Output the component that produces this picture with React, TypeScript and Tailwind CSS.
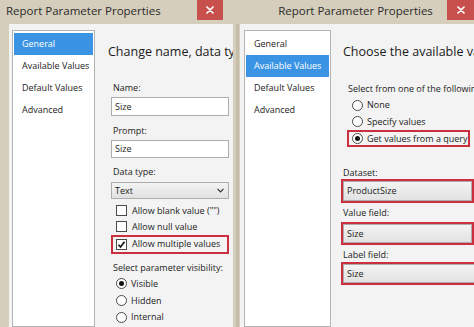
import type { ReactNode } from 'react';

const navItems = ['General', 'Available Values', 'Default Values', 'Advanced'];

function CloseButton({ className = '' }: { className?: string }) {
    return (
        <div className={`flex h-[20px] shrink-0 items-center justify-center bg-[#c8504c] ${className}`}>
            <svg width="8" height="8" viewBox="0 0 8 8">
                <path d="M1 1l6 6M7 1L1 7" stroke="#fff" strokeWidth="1.7" strokeLinecap="round" />
            </svg>
        </div>
    );
}

function NavList({ active, width }: { active: number; width: string }) {
    return (
        <div className={`${width} shrink-0 self-stretch border border-[#b4b4b4] bg-white px-[1px] pt-[2px]`}>
            {navItems.map((item, i) => (
                <div
                    key={item}
                    className={`flex h-[22px] items-center pl-[8px] whitespace-nowrap ${i === active ? 'bg-[#3b93e4] text-white' : 'text-[#222]'}`}
                >
                    {item}
                </div>
            ))}
        </div>
    );
}

function Label({ children, className = '' }: { children: ReactNode; className?: string }) {
    return <div className={`h-[12px] overflow-hidden leading-[12px] pl-[2px] whitespace-nowrap ${className}`}>{children}</div>;
}

function TextBox({ value, height }: { value: string; height: string }) {
    return (
        <div className={`${height} flex items-center border border-[#abadb3] bg-white pl-[3px]`}>{value}</div>
    );
}

function Radio({ checked }: { checked?: boolean }) {
    return (
        <span className="flex h-[11px] w-[11px] shrink-0 items-center justify-center rounded-full border border-[#4a4a4a] bg-white">
            {checked && <span className="h-[5px] w-[5px] rounded-full bg-[#111]" />}
        </span>
    );
}

function CheckBox({ checked }: { checked?: boolean }) {
    return (
        <span className="flex h-[11px] w-[11px] shrink-0 items-center justify-center border border-[#4a4a4a] bg-white">
            {checked && (
                <svg width="9" height="9" viewBox="0 0 9 9">
                    <path d="M1.5 4.8l2 2.2 4-5.2" fill="none" stroke="#111" strokeWidth="1.6" />
                </svg>
            )}
        </span>
    );
}

function GreySelect({ value, chevron }: { value: string; chevron?: boolean }) {
    return (
        <div className="flex h-full items-center justify-between border border-[#adadad] bg-gradient-to-b from-[#f3f3f3] to-[#e2e2e2] pl-[3px] pr-[4px]">
            <span>{value}</span>
            {chevron && (
                <svg width="7" height="5" viewBox="0 0 7 5">
                    <path d="M0.5 0.8l3 3 3-3" fill="none" stroke="#333" strokeWidth="1.2" />
                </svg>
            )}
        </div>
    );
}

export default function App() {
    return (
        <div className="flex h-[327px] w-[474px] overflow-hidden bg-[#d5cebc] font-['Open_Sans',sans-serif] text-[9px] font-medium text-[#1b1b1b]">
            {/* Left dialog */}
            <div className="flex w-[233px] shrink-0 flex-col overflow-hidden">
                <div className="flex h-[24px] shrink-0 items-start">
                    <div className="flex h-[24px] items-center pl-[6px] pb-[2px] text-[11.5px] font-normal text-[#2b2b2b] whitespace-nowrap">
                        Report Parameter Properties
                    </div>
                    <CloseButton className="ml-auto mr-[10px] w-[26px]" />
                </div>
                <div className="ml-[9px] flex min-h-0 flex-1 bg-[#f3f3f3] pl-[3px] pt-[6px]">
                    <NavList active={0} width="w-[83px]" />
                    <div className="min-w-0 flex-1 pl-[13px] pt-[14px]">
                        <div className="h-[16px] overflow-hidden text-[12.5px] leading-[16px] font-normal whitespace-nowrap">
                            Change name, data type, and other properties.
                        </div>
                        <div className="ml-[3px] w-[118px]">
                            <Label className="mt-[22px]">Name:</Label>
                            <div className="mt-[3px]">
                                <TextBox value="Size" height="h-[19px]" />
                            </div>
                            <Label className="mt-[9px]">Prompt:</Label>
                            <div className="mt-[3px]">
                                <TextBox value="Size" height="h-[18px]" />
                            </div>
                            <Label className="mt-[8px]">Data type:</Label>
                            <div className="mt-[4px] h-[17px]">
                                <GreySelect value="Text" chevron />
                            </div>
                            <div className="mt-[3px] flex h-[16.5px] items-center gap-[5px] pl-[5px] whitespace-nowrap">
                                <CheckBox />
                                <span>Allow blank value ("")</span>
                            </div>
                            <div className="flex h-[16px] items-center gap-[5px] pl-[5px] whitespace-nowrap">
                                <CheckBox />
                                <span>Allow null value</span>
                            </div>
                            <div className="flex h-[19px] items-center gap-[5px] border-2 border-[#c92f3e] pl-[3px] whitespace-nowrap">
                                <CheckBox checked />
                                <span>Allow multiple values</span>
                            </div>
                            <Label className="mt-[8px]">Select parameter visibility:</Label>
                            <div className="mt-[2px]">
                                {['Visible', 'Hidden', 'Internal'].map((v, i) => (
                                    <div key={v} className="flex h-[16.7px] items-center gap-[4px] pl-[5px]">
                                        <Radio checked={i === 0} />
                                        <span>{v}</span>
                                    </div>
                                ))}
                            </div>
                        </div>
                    </div>
                </div>
            </div>

            {/* Right dialog */}
            <div className="flex min-w-0 flex-1 flex-col overflow-hidden">
                <div className="flex h-[24px] shrink-0 items-start">
                    <div className="w-[27px] shrink-0" />
                    <div className="flex h-[24px] flex-1 items-center justify-center pl-[4px] pb-[2px] text-[11.5px] font-normal text-[#2b2b2b] whitespace-nowrap">
                        Report Parameter Properties
                    </div>
                    <CloseButton className="w-[27px]" />
                </div>
                <div className="flex min-h-0 flex-1">
                    <div className="flex w-[7px] shrink-0">
                        <div className="ml-[3px] w-[3px] bg-[#c4bda9]" />
                    </div>
                    <div className="flex min-w-0 flex-1 bg-[#f3f3f3] pl-[4px] pt-[6px]">
                        <NavList active={1} width="w-[87px]" />
                        <div className="min-w-0 flex-1 overflow-hidden pl-[10px] pt-[14px]">
                            <div className="h-[16px] overflow-hidden pl-[2px] text-[12.5px] leading-[16px] font-normal whitespace-nowrap">
                                Choose the available values for this parameter.
                            </div>
                            <Label className="mt-[23px] pl-[7px]">Select from one of the following options:</Label>
                            <div className="mt-[1.7px]">
                                {['None', 'Specify values'].map(v => (
                                    <div key={v} className="flex h-[16.7px] items-center gap-[4px] pl-[11px] whitespace-nowrap">
                                        <Radio />
                                        <span>{v}</span>
                                    </div>
                                ))}
                                <div className="ml-[6px] flex h-[17px] w-[123px] items-center gap-[4px] border-2 border-[#c92f3e] pl-[3px] whitespace-nowrap">
                                    <Radio checked />
                                    <span>Get values from a query</span>
                                </div>
                            </div>
                            <Label className="mt-[20px]">Dataset:</Label>
                            <div className="h-[24px] w-[133px] border-2 border-[#c92f3e]">
                                <GreySelect value="ProductSize" />
                            </div>
                            <Label className="mt-[4px]">Value field:</Label>
                            <div className="mt-[3px] h-[23px] w-[133px] border-2 border-[#c92f3e]">
                                <GreySelect value="Size" />
                            </div>
                            <Label className="mt-[4px]">Label field:</Label>
                            <div className="mt-[1px] h-[23px] w-[150px] border-2 border-[#c92f3e]">
                                <GreySelect value="Size" />
                            </div>
                        </div>
                    </div>
                </div>
            </div>
        </div>
    );
}
